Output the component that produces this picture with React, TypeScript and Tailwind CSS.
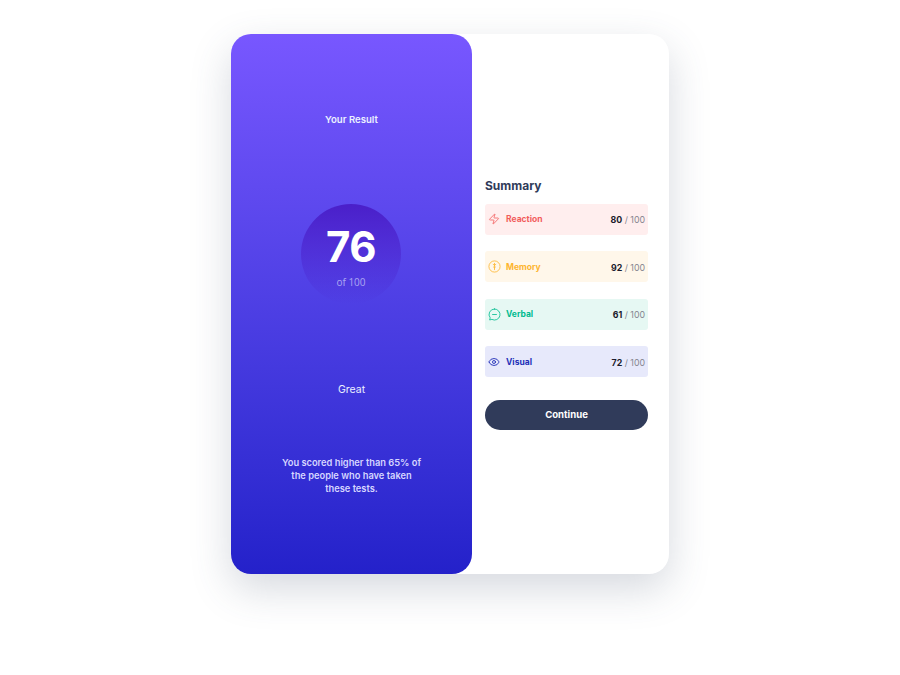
import { Zap, Eye } from 'lucide-react';

function BrainIcon() {
  return (
    <svg viewBox="0 0 20 20" fill="none" stroke="currentColor" strokeWidth="1.25" className="h-[13px] w-[13px]">
      <circle cx="10" cy="10" r="8.6" />
      <path d="M10 4.5v11M10 8 7.5 6.5M10 8l2.5-1.5M10 12l-2-1.5M10 12l2-1.5" />
    </svg>
  );
}

function ChatIcon() {
  return (
    <svg viewBox="0 0 20 20" fill="none" stroke="currentColor" strokeWidth="1.25" strokeLinecap="round" className="h-[13px] w-[13px]">
      <path d="M10 1.5a8.5 8.5 0 1 1-4 16l-3.5.9.9-3.2A8.5 8.5 0 0 1 10 1.5Z" />
      <path d="M7 10h6" />
    </svg>
  );
}

const rows = [
  { name: 'Reaction', score: 80, bg: 'bg-[#ffeeee]', text: 'text-[#f25c5c]', icon: <Zap className="h-[12px] w-[12px]" strokeWidth={1.6} /> },
  { name: 'Memory', score: 92, bg: 'bg-[#fff7ea]', text: 'text-[#fdb52e]', icon: <BrainIcon /> },
  { name: 'Verbal', score: 61, bg: 'bg-[#e6f8f3]', text: 'text-[#00bb8f]', icon: <ChatIcon /> },
  { name: 'Visual', score: 72, bg: 'bg-[#e7e9fb]', text: 'text-[#2230b8]', icon: <Eye className="h-[12px] w-[12px]" strokeWidth={1.8} /> },
];

export default function App() {
  return (
    <div className="flex h-[675px] w-[900px] justify-center bg-white pt-[34px] font-['Inter',sans-serif]">
      <div className="flex h-[540px] w-[438px] rounded-[20px] bg-white shadow-[0_15px_40px_rgba(70,80,110,0.22)]">
        <div className="flex w-[241px] flex-col items-center rounded-[20px] bg-gradient-to-b from-[#7857ff] to-[#2421ca] pt-[79px]">
          <h1 className="text-[9.6px] leading-[14px] font-semibold text-[#ebf1ff]">Your Result</h1>
          <div className="mt-[77px] ml-[-1px] flex h-[100px] w-[100px] flex-col items-center rounded-full bg-gradient-to-b from-[#4a1fc9] to-[#4a1fc9]/0 pt-[15px]">
            <span className="text-[42px] leading-[56px] font-bold tracking-[-0.5px] text-white">76</span>
            <span className="font-['Open_Sans',sans-serif] text-[10px] leading-[14px] text-[#ebf1ff]/60">of 100</span>
          </div>
          <p className="mt-[79px] text-[10.5px] leading-[14px] text-[#ebf1ff]">Great</p>
          <p className="mt-[59px] w-[145px] text-center text-[9.3px] leading-[13px] font-semibold text-[#d6d6ff]">
            You scored higher than 65% of the people who have taken these tests.
          </p>
        </div>
        <div className="flex flex-1 flex-col justify-center pr-[21px] pl-[13px]">
          <h2 className="text-[12px] leading-[16px] font-bold text-[#303b5a]">Summary</h2>
          <div className="mt-[10px] flex flex-col gap-[16.5px]">
            {rows.map((row) => (
              <div key={row.name} className={`flex h-[31px] items-center justify-between rounded-[3px] pr-[3px] pl-[2.5px] ${row.bg}`}>
                <div className={`flex items-center ${row.text}`}>
                  <span className="flex w-[13px] justify-center">{row.icon}</span>
                  <span className="ml-[5.5px] pt-[1px] text-[8.5px] font-bold">{row.name}</span>
                </div>
                <div className="pt-[1px] text-[8.8px]">
                  <span className="font-bold text-[#1b1b2b]">{row.score}</span>
                  <span className="text-[#85858f]"> / 100</span>
                </div>
              </div>
            ))}
          </div>
          <button type="button" className="mt-[23px] h-[30px] rounded-full bg-[#303b5a] text-[9.6px] font-bold text-white">
            Continue
          </button>
        </div>
      </div>
    </div>
  );
}
